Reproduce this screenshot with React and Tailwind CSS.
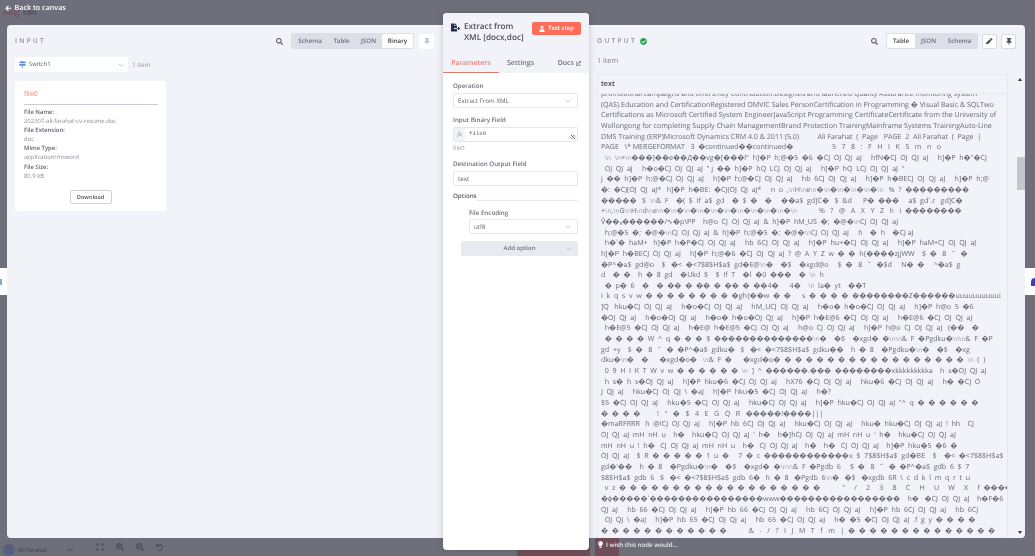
import React from "react";
import { FaArrowLeft, FaSearch, FaThumbtack, FaPen, FaMapSigns, FaFileExport, FaFlask, FaExternalLinkAlt, FaCheckCircle, FaLightbulb, FaSearchPlus, FaSearchMinus, FaUndo, FaExpand, FaEllipsisH } from "react-icons/fa";
import { ChevronDown } from "lucide-react";

const X = "\uFFFD";
const raw = [
"promotional campaigns and offers.Key Contribution:Designed and launched Quality Assurance monitoring system",
"(QAS).Education and CertificationRegistered OMVIC Sales PersonCertification in Programming # Visual Basic & SQLTwo",
"Certifications as Microsoft Certified System EngineerJavaScript Programming CertificateCertificate from the University of",
"Wollongong for completing Supply Chain ManagementBrand Protection TrainingMainframe Systems TrainingAuto-Line",
"DMS Training (ERP)Microsoft Dynamics CRM 4.0 & 2011 (5.0)          Ali Farahat  (  Page   PAGE  2  Ali Farahat  (  Page  |",
"PAGE   \\* MERGEFORMAT   3  #continued##continued#                     5   7   8   :   F   H   I   K   S   m   n   o",
"  \\n  \\n+\\n###]##e##Д##vg#[###l\"  h]#P  h;@#5  #6  #CJ  OJ  QJ  aJ     hfN#CJ  OJ  QJ  aJ     h]#P  h#\"#CJ",
"  OJ  QJ  aJ     h#o#CJ  OJ  QJ  aJ  \" j  ##  h]#P  hQ  LCJ  OJ  QJ  aJ     h]#P  hQ  LCJ  OJ  QJ  aJ  \"",
"j  ##  h]#P  h;@#CJ  OJ  QJ  aJ     h]#P  h;@#CJ  OJ  QJ  aJ     hb  6CJ  OJ  QJ  aJ     h]#P  h#BECJ  OJ  QJ  aJ     h]#P  h;@",
"#:  #CJ(OJ  QJ  aJ*   h]#P  h#BE:  #CJ(OJ  QJ  aJ*     n  o  ,\\nH\\ne\\n#\\n#\\n#\\n#\\n#\\n   %  ?  #########",
"#####   $  \\n&  F    #(  $  If  a$  gd    #  $  #    #     ##a$  gd]C#   $  &d      P#  ###     a$  gd`.r   gd]C#",
"+\\n,\\nG\\nH\\nd\\ne\\n#\\n#\\n#\\n#\\n#\\n#\\n#\\n#\\n#\\n#\\n            %   ?   @   A   X   Y   Z   h   i  ########",
"V̂##₄######∕∿#p\\PP    h@o  CJ  OJ  QJ  aJ  &  h]#P  hM_US  #;  #@#\\nCJ  OJ  QJ  aJ",
"  h;@#5  #;  #@#\\nCJ  OJ  QJ  aJ  &  h]#P  h;@#5  #;  #@#\\nCJ  OJ  QJ  aJ     h    #  h    #CJ aJ",
"  h#`#  haM+   h]#P  h#P#CJ  OJ  QJ  aJ     hb  6CJ  OJ  QJ  aJ     h]#P  hu+#CJ  OJ  QJ  aJ     h]#P  haM+CJ  OJ  QJ  aJ",
"h]#P  h#BECJ  OJ  QJ  aJ     h]#P  h;@#6  #CJ  OJ  QJ  aJ  ?  @  A  Y  Z  w  #  #  h{####zjjWW    $  #   8   ˜   #",
"#P^#a$  gd@o    $   #<  #<7$8$H$a$  gd#E@\\n#    #$    #xgd@o     $  #   8   ˜   #$d     N#  #     ^#a$  g",
"d    #  #    h  #  8  gd    #Ukd  $    $  If  T    #l  #0  ###    #  \\n  h",
"  #  p#  6    #    #  ##  #  ##  #  ##  #  ##4#      4#    \\n  la#  yt    ##T",
"i  k  q  s  v  w  #  #  #  #  #  #  #  #  #gh{##w  #  #      s  #  #  #  #  ########Z######uuuuuuuuuui",
"]Q   hku#CJ  OJ  QJ  aJ     h#o#CJ  OJ  QJ  aJ     hM_UCJ  OJ  QJ  aJ     h#o#  h#o#CJ  OJ  QJ  aJ     h]#P  h@o  5  #6",
"#OJ  QJ  aJ     h#o#OJ  QJ  aJ     h#o#  h#o#OJ  QJ  aJ     h]#P  h#E@6  #CJ  OJ  QJ  aJ     h#E@6  #CJ  OJ  QJ  aJ",
"  h#E@5  #CJ  OJ  QJ  aJ     h#E@  h#E@5  #CJ  OJ  QJ  aJ     h@o  CJ  OJ  QJ  aJ     h]#P  h@o  CJ  OJ  QJ  aJ   (##    #",
"  #  #  #  #  W  ^  q  #  #  #  $  ##############\\n#    #$    #xgd#  #\\n\\n&  F  #Pgdku#\\n\\n&  F  #P",
"gd  +y    $  #   8   ˜   #  #P^#a$  gdku#   $   #<  #<7$8$H$a$  gdku##    h  #  8    #Pgdku#\\n#    #$    #xg",
"dku#\\n#    #      #xgd#o#   \\n&  F  #      #xgd#o#  #  #  #  #  #  #  #  #  #  #  #  #  #  #  #  #  #  \\n  (  )",
"  0  9  H  I  K  T  W  v  w  #  #  #  #  #  #  \\n  ]  ^  ######.###  ########xkkkkkkkkka    h  s#OJ  QJ  aJ",
"  h  s#  h  s#OJ  QJ  aJ     h]#P  hku#6  #CJ  OJ  QJ  aJ     hX76  #CJ  OJ  QJ  aJ     hku#6  #CJ  OJ  QJ  aJ     h#  #CJ  O",
"J  QJ  aJ     hku#CJ  OJ  QJ  \\  #aJ     h]#P  hku#5  #CJ  OJ  QJ  aJ     h#?",
"$5  #CJ  OJ  QJ  aJ     hku#5  #CJ  OJ  QJ  aJ     hku#CJ  OJ  QJ  aJ     h]#P  hku#CJ  OJ  QJ  aJ  \"^  q  #  #  #  #  #  #",
"#  #  #  #         !   \"   #   $   4   E   G   Q   R   #####!####|||",
"#maRFRRR   h  @ICJ  OJ  QJ  aJ     h]#P  hb  6CJ  OJ  QJ  aJ     hku#CJ  OJ  QJ  aJ     hku#  hku#CJ  OJ  QJ  aJ  !  hh    CJ",
"OJ  QJ  aJ  mH  nH  u    h#    hku#CJ  OJ  QJ  aJ  '  h#    h#]hCJ  OJ  QJ  aJ  mH  nH  u  '  h#    hku#CJ  OJ  QJ  aJ",
"mH  nH  u  !  h#   CJ  OJ  QJ  aJ  mH  nH  u    h#   CJ  OJ  QJ  aJ    h#    h#   CJ  OJ  QJ  aJ    h]#P  hku#5  #6  #",
"OJ  QJ  aJ    $  R  #  #  #  #  #  1  u  #     7  #  c  ############x  $  7$8$H$a$  gd#BE    $    #<  #<7$8$H$a$",
"gd#'##    h  #  8    #Pgdku#\\n#    #$    #xgd#  #\\n\\n&  F  #Pgdb  6     $  #   8   ˜   #  #P^#a$  gdb  6  $  7",
"$8$H$a$  gdb  6   $   #<  #<7$8$H$a$  gdb  6#   h  #  8   #Pgdb  6\\n#   #$   #xgdb  6R  \\  c  d  k  l  m  q  r  t  u",
"  v  z  #  #  #  #  #  #  #  #  #  #  #  #  #  #  #  #  #  #  #            \"     /     2     3     8     C     H     U     W     X     f  ######",
"#ϕ#####`################www#################    h#   #CJ  OJ  QJ  aJ    h#F#6  #CJ  OJ",
"QJ  aJ     hb  66  #CJ  OJ  QJ  aJ     h]#P  hb  66  #CJ  OJ  QJ  aJ     hb  6CJ  OJ  QJ  aJ     h]#P  hb  6CJ  OJ  QJ  aJ     hb  6CJ",
"  OJ  QJ  \\  #aJ     h]#P  hb  65  #CJ  OJ  QJ  aJ     hb  65  #CJ  OJ  QJ  aJ     h#  #5  #CJ  OJ  QJ  aJ  .f  g  y  #  #  #  #",
"#  #  #  #  #  #  #  #  #  #  #  #            &   -   /   ?   I   J   M   T   f   m   |  #  #  #  #  #  #  #  #  #  #  #  #  #  #",
"#  #  #  #  C  D  H  U  P  h  k  m  #  #  #  #  #  #  #  #  #  #  #  #  #  #  #  #  #  #  #  #  #  #  #  #  #",
];

function Line({ s }) {
  const parts = s.replaceAll("#", X).split("\\n");
  return (
    <div className="h-[10.67px] leading-[10.67px] whitespace-pre">
      {parts.map((p, i) => (
        <React.Fragment key={i}>
          {i > 0 && <span className="text-[#a0a3ad] text-[6.4px]">\n</span>}
          {p}
        </React.Fragment>
      ))}
    </div>
  );
}

function Tab({ active, w, children }) {
  return (
    <div className={`h-[14px] rounded-[2px] flex items-center justify-center text-[6.2px] font-semibold ${w} ${active ? "bg-white text-[#3f3f4a]" : "text-[#6d707d]"}`}>
      {children}
    </div>
  );
}

function Field({ children, className = "" }) {
  return <div className={`h-[15px] bg-white border border-[#e4e6ed] rounded-[2px] flex items-center pl-[4px] pr-[5px] text-[6.2px] text-[#5f616d] ${className}`}>{children}</div>;
}

function Label({ children, className = "" }) {
  return <div className={`text-[6.2px] leading-[10px] font-semibold text-[#6d6f7b] ${className}`}>{children}</div>;
}

function Meta({ k, v }) {
  return (
    <>
      <div className="h-[9.1px] leading-[9.1px] font-semibold text-[#5f616d]">{k}</div>
      <div className="h-[9.1px] leading-[9.1px] text-[#8c8e98]">{v}</div>
    </>
  );
}

export default function App() {
  return (
    <div className="relative w-[1035px] h-[556px] overflow-hidden flex flex-col bg-[#6f6f7b] font-['Open_Sans',sans-serif] [text-rendering:geometricPrecision] blur-[0.3px]">
      {/* header */}
      <div className="relative h-[25px] shrink-0">
        <div className="absolute left-[2px] top-[8px] flex items-center text-[#4d4d5a]">
          <svg width="18" height="10" viewBox="0 0 18 10" fill="none" stroke="#77505c" strokeWidth="1">
            <circle cx="2.5" cy="5" r="1.6" /><circle cx="8" cy="5" r="1.6" /><circle cx="15" cy="7.5" r="1.8" /><circle cx="15" cy="2.5" r="1.8" />
            <path d="M4 5h2.5M9.5 5h2L13 2.8M11.5 5L13 7.2" />
          </svg>
          <span className="ml-[3px] text-[7.5px] font-semibold leading-[10px]">n8n</span>
        </div>
        <div className="absolute left-[5px] top-[2px] flex items-center gap-[3px] text-white text-[7.2px] leading-[12px] font-semibold">
          <FaArrowLeft className="w-[6.5px] h-[6.5px]" />
          Back to canvas
        </div>
      </div>

      {/* panels */}
      <div className="flex h-[513px] shrink-0 pl-[7px] relative z-10">
        {/* input */}
        <div className="w-[436px] bg-[#f1f3f8] rounded-l-[4px] pl-[8px] pr-[9px]">
          <div className="h-[16px] mt-[8px] flex items-center">
            <span className="text-[6.5px] font-semibold tracking-[2.3px] text-[#8b8d99]">INPUT</span>
            <FaSearch className="ml-auto mr-[8px] w-[7px] h-[7px] text-[#5a5c68]" />
            <div className="flex bg-[#dbdfe7] rounded-[2px] p-[1px] w-[123px] h-[16px]">
              <Tab w="w-[36px]">Schema</Tab>
              <Tab w="w-[27px]">Table</Tab>
              <Tab w="w-[27px]">JSON</Tab>
              <Tab active w="w-[31px]">Binary</Tab>
            </div>
            <div className="ml-[5px] w-[15px] h-[15px] bg-white rounded-[2px] flex items-center justify-center">
              <FaThumbtack className="w-[6px] h-[7px] text-[#c4c6cf]" />
            </div>
          </div>
          <div className="flex items-center h-[15px] mt-[8px]">
            <div className="w-[113px] h-[15px] bg-white rounded-[2px] flex items-center pl-[4px] pr-[3px] text-[6px] text-[#5f616d]">
              <FaMapSigns className="w-[7px] h-[7px] text-[#5b8fdc] mr-[3px]" />
              Switch1
              <ChevronDown className="ml-auto w-[8px] h-[8px] text-[#a9acb6]" />
            </div>
            <span className="ml-[4px] text-[6.3px] text-[#9597a2]">1 item</span>
          </div>
          <div className="mt-[9px] w-[151px] h-[130px] bg-white rounded-[2px] px-[9px] pt-[8px]">
            <div className="h-[12px] leading-[12px] text-[7px] text-[#e9816f]">file0</div>
            <div className="mt-[3px] mr-[-1px] border-t border-[#c9cbd3]" />
            <div className="mt-[3px] text-[5.9px]">
              <Meta k="File Name:" v="202307-ali-farahat-cv-resume.doc" />
              <Meta k="File Extension:" v="doc" />
              <Meta k="Mime Type:" v="application/msword" />
              <Meta k="File Size:" v="80.9 kB" />
            </div>
            <div className="mt-[9px] flex justify-center">
              <div className="w-[42px] h-[14px] bg-white border border-[#d0d2da] rounded-[2px] flex items-center justify-center text-[5.6px] font-semibold text-[#4f515d]">Download</div>
            </div>
          </div>
        </div>

        {/* node settings */}
        <div className="relative z-20 w-[146px] shrink-0 -mt-[12px] -mb-[12px] bg-white rounded-[4px] overflow-hidden flex flex-col shadow-[0_0_6px_rgba(60,60,75,0.25)]">
          <div className="h-[60px] bg-[#f1f3f8] relative">
            <div className="flex pt-[9px] pl-[8px] pr-[8px]">
              <FaFileExport className="w-[9px] h-[9px] mt-[1px] text-[#27305c] shrink-0" />
              <div className="ml-[4px] w-[60px] text-[8.2px] leading-[10.5px] font-semibold text-[#4c4e56]">Extract from XML [docx,doc]</div>
              <div className="ml-auto w-[49px] h-[13px] bg-[#ff6d5a] rounded-[2px] flex items-center justify-center gap-[3px] text-white text-[5.9px] font-semibold shrink-0">
                <FaFlask className="w-[6px] h-[6px]" />
                Test step
              </div>
            </div>
            <div className="absolute left-0 right-0 bottom-0 h-[18px] flex text-[7px] font-semibold">
              <div className="w-[56px] border-b-[1px] border-[#e07a6c] text-[#e9816f] text-center leading-[17px]">Parameters</div>
              <div className="ml-[8px] text-[#6d707d] leading-[17px]">Settings</div>
              <div className="ml-auto mr-[8px] text-[#6d707d] leading-[17px] flex items-center gap-[2px] h-[17px]">Docs <FaExternalLinkAlt className="w-[5px] h-[5px]" /></div>
            </div>
          </div>
          <div className="pl-[10px] pr-[11px] pt-[8px]">
            <Label>Operation</Label>
            <Field className="mt-[2px]">Extract From XML<ChevronDown className="ml-auto w-[8px] h-[8px] text-[#a9acb6]" /></Field>
            <Label className="mt-[7px]">Input Binary Field</Label>
            <div className="mt-[2px] h-[15px] bg-white border border-[#e4e6ed] rounded-[2px] flex items-center text-[6px] text-[#5f616d] relative">
              <div className="w-[11px] h-full bg-[#f1f3f8] flex items-center justify-center italic font-['Liberation_Serif',serif] text-[6.5px] text-[#8a8c98]">fx</div>
              <span className="ml-[4px] font-['Liberation_Mono',monospace] text-[5.7px]">file0</span>
              <svg className="absolute right-[1px] bottom-[1px]" width="6" height="6" viewBox="0 0 7 7" fill="none" stroke="#444" strokeWidth="1"><path d="M1 1l5 5M1 4l2 2M4 1l2 2" /></svg>
            </div>
            <div className="text-[5.8px] leading-[12px] text-[#9597a2]">file0</div>
            <Label className="mt-[5px]">Destination Output Field</Label>
            <Field className="mt-[2px]">text</Field>
            <Label className="mt-[5px] text-[#585a62]">Options</Label>
            <div className="border-t border-[#e4e6ed] mt-[-1px] ml-[24px]" />
            <div className="pl-[16px] mt-[7px]">
              <Label>File Encoding</Label>
              <Field className="mt-[1px]">utf8<ChevronDown className="ml-auto w-[8px] h-[8px] text-[#a9acb6]" /></Field>
            </div>
            <div className="ml-[8px] mt-[7px] h-[15px] bg-[#e8eaf1] rounded-[2px] flex items-center justify-center relative text-[6px] font-semibold text-[#6d6f7b]">
              Add option
              <ChevronDown className="absolute right-[5px] w-[8px] h-[8px] text-[#a9acb6]" />
            </div>
          </div>
        </div>

        {/* output */}
        <div className="w-[436px] bg-[#f1f3f8] rounded-r-[4px] flex flex-col pl-[8px] overflow-hidden">
          <div className="h-[16px] mt-[8px] shrink-0 flex items-center pr-[9px]">
            <span className="text-[6.5px] font-semibold tracking-[2.3px] text-[#8b8d99]">OUTPUT</span>
            <FaCheckCircle className="ml-[3px] w-[7px] h-[7px] text-[#27a052]" />
            <FaSearch className="ml-auto mr-[8px] w-[7px] h-[7px] text-[#5a5c68]" />
            <div className="flex bg-[#dbdfe7] rounded-[2px] p-[1px] w-[92px] h-[16px]">
              <Tab active w="w-[28px]">Table</Tab>
              <Tab w="w-[27px]">JSON</Tab>
              <Tab w="w-[35px]">Schema</Tab>
            </div>
            <div className="ml-[4px] w-[15px] h-[15px] bg-white border border-[#d9dbe3] rounded-[2px] flex items-center justify-center">
              <FaPen className="w-[6.5px] h-[6.5px] text-[#4c4e5a]" />
            </div>
            <div className="ml-[4px] w-[15px] h-[15px] bg-white border border-[#d9dbe3] rounded-[2px] flex items-center justify-center">
              <FaThumbtack className="w-[6px] h-[7px] text-[#4c4e5a]" />
            </div>
          </div>
          <div className="h-[16px] mt-[4px] shrink-0 flex items-center text-[7.2px] text-[#7c7e8a]">1 item</div>
          <div className="flex flex-1 min-h-0 mt-[5px]">
            <div className="w-[411px] shrink-0 border-l border-r border-t border-[#e6e8ef] flex flex-col min-h-0">
              <div className="h-[19px] shrink-0 border-b border-[#e6e8ef] pl-[3px] flex items-center text-[7.2px] font-semibold text-[#3f3f4a]">text</div>
              <div className="flex-1 min-h-0 overflow-hidden pl-[3px] text-[7.1px] text-[#686a74]">
                <div className="-mt-[5px]">
                  {raw.map((l, i) => <Line key={i} s={l} />)}
                </div>
              </div>
            </div>
            <div className="flex-1 relative">
              <div className="absolute left-[9px] right-0 top-[83px] h-[33px] bg-[#c5c6cb]" />
              <div className="absolute left-[10px] top-[4px] border-x-[2px] border-b-[3px] border-x-transparent border-b-[#333]" />
              <div className="absolute left-[10px] bottom-[4px] border-x-[2px] border-t-[3px] border-x-transparent border-t-[#333]" />
            </div>
          </div>
        </div>
        <div className="flex-1" />
      </div>

      {/* footer */}
      <div className="relative flex-1 flex items-center text-[#4a4a58]">
        <div className="absolute left-[517px] top-0 bottom-0 w-[73px] bg-[#704d56]" />
        <div className="absolute left-[595px] top-0 bottom-0 w-[24px] bg-[#704d56]" />
        <div className="ml-[3px] mt-[6px] w-[12px] h-[12px] rounded-full bg-[#56607e]" />
        <span className="ml-[3px] mt-[6px] text-[5.5px] font-semibold">Ali Farahat</span>
        <FaEllipsisH className="ml-[20px] mt-[6px] w-[6px] h-[6px]" />
        <div className="ml-[23px] flex items-center gap-[12px]">
          <FaExpand className="w-[8px] h-[8px]" />
          <FaSearchPlus className="w-[8px] h-[8px]" />
          <FaSearchMinus className="w-[8px] h-[8px]" />
          <FaUndo className="w-[7px] h-[7px]" />
        </div>
        <div className="absolute left-[598px] top-[2px] flex items-center gap-[3px] text-[6.2px] font-semibold text-[#e8e8ee]">
          <FaLightbulb className="w-[5px] h-[7px] text-white" />
          I wish this node would...
        </div>
      </div>

      {/* canvas nodes behind the panels, showing at the window edges */}
      <div className="absolute left-0 top-[268px] w-[7px] h-[27px] bg-white flex items-center">
        <div className="w-[2px] h-[6px] bg-[#7fa9d8]" />
      </div>
      <div className="absolute right-0 top-[268px] w-[10px] h-[27px] bg-white flex items-center justify-start pl-[6px]">
        <div className="w-[4px] h-[8px] bg-[#2f3fd0] rounded-tl-[4px]" />
      </div>
    </div>
  );
}
